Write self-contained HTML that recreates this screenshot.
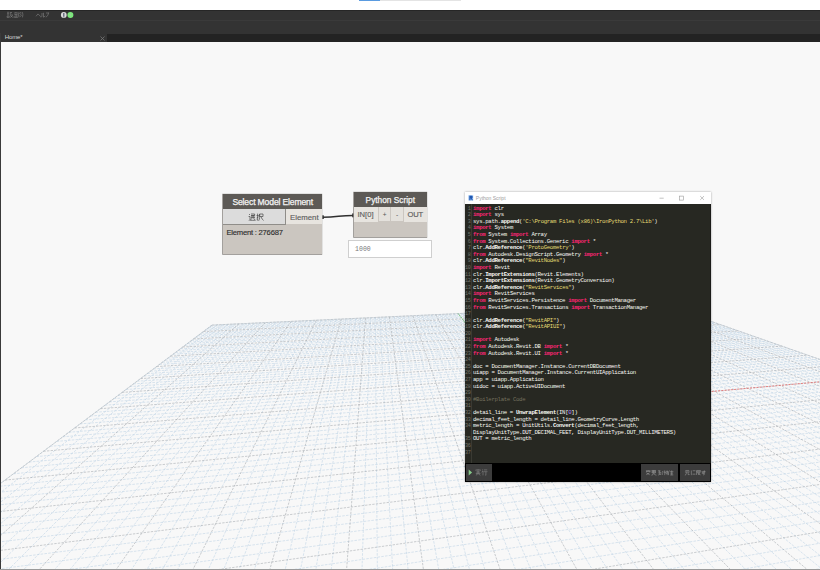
<!DOCTYPE html>
<html><head><meta charset="utf-8">
<style>
*{margin:0;padding:0;box-sizing:border-box}
html,body{width:820px;height:570px;overflow:hidden;background:#fff;font-family:"Liberation Sans",sans-serif}
.abs{position:absolute}
#prog1{left:359px;top:0;width:21px;height:1.3px;background:#5a9be0}
#prog2{left:380px;top:0;width:81px;height:1.3px;background:#e4e4e4}
#menubar{left:0;top:9.5px;width:820px;height:23.5px;background:#333;border-top:1px solid #262626}
#menuline{left:0;top:20px;width:820px;height:1px;background:#3a3a3a}
#tabstrip{left:0;top:33px;width:820px;height:9px;background:#333}
#tabdark{left:107px;top:34px;width:713px;height:7.5px;background:#232323}
#hometxt{left:4.8px;top:33.2px;font-size:6px;letter-spacing:-0.15px;color:#d8d8d8;line-height:8px}
#tabx{left:100px;top:35.5px;width:5px;height:5px}
#canvas{left:0;top:42px;width:820px;height:528px;background:#f8f8f8;overflow:hidden}
#leftb{left:0;top:33px;width:1px;height:537px;background:#3a3a3a}
#botb{left:0;top:568.5px;width:820px;height:1.5px;background:#9a9a9a}
.grid{position:absolute;left:0;top:0}
.node{position:absolute;background:#cbc6c0;box-shadow:-0.3px 0.3px 0 0.5px #8e8b87}
.nhead{position:absolute;left:0;right:0;top:0;background:#5d5a56;color:#f4f4f4;text-align:center;-webkit-text-stroke:0.25px #f4f4f4}
.wire{position:absolute;left:0;top:0}
#outbox{left:348.3px;top:240.1px;width:83.7px;height:17.5px;background:#fff;border:0.8px solid #cfcfcf;font-family:"Liberation Mono",monospace;font-size:6.5px;color:#777;padding-left:5.8px;line-height:18.6px}
#pywin{left:464.8px;top:191.8px;width:246.4px;height:290.6px;background:#000;box-shadow:0 0 2px rgba(0,0,0,.35)}
#pytitle{left:0;top:0;width:246.5px;height:12px;background:#fff}
#pyttxt{left:11px;top:3.4px;font-size:5px;color:#a0a0a0;line-height:7px}
#editor{left:0;top:12px;width:246.5px;height:259.7px;background:#272822;overflow:hidden;border-right:0.8px solid #1c1c19}
#gutsep{left:6.2px;top:0;width:0.6px;height:260px;background:#3a3a33}
#code{left:8.2px;top:1.8px;font-family:"Liberation Mono",monospace;font-size:5.7px;letter-spacing:-0.34px;color:#f8f8f2}
.ln{white-space:pre}
.ln{height:6.595px;line-height:6.595px}
.k{color:#f92672;font-weight:bold}
.s{color:#e6db74}
.f{font-weight:bold}
.c{color:#75715e}
.n{color:#ae81ff}
#nums{left:0;top:1.8px;width:6px;font-family:"Liberation Mono",monospace;font-size:5.13px;letter-spacing:-0.15px;color:#75756c;white-space:pre;text-align:right;line-height:6.595px}
.btn{position:absolute;background:#3c3c3c;top:272.7px;height:16.6px}
</style></head><body>
<div class="abs" id="prog1"></div><div class="abs" id="prog2"></div>
<div class="abs" id="menubar"></div>
<div class="abs" id="menuline"></div>
<div class="abs" id="tabstrip"></div>
<div class="abs" id="tabdark"></div>
<div class="abs" id="hometxt">Home*</div>
<svg class="abs" id="tabx" viewBox="0 0 5 5"><path d="M0.5 0.5L4.5 4.5M4.5 0.5L0.5 4.5" stroke="#777" stroke-width="0.8"/></svg>
<!-- menu text approximations -->
<svg class="abs" style="left:0;top:9px" width="90" height="24" viewBox="0 9 90 24">
 <g stroke="#8a8a8a" stroke-width="0.55" fill="none">
  <g transform="translate(0.56,0) scale(0.92,1)"><path vector-effect="non-scaling-stroke" d="M7 12.3h2.5M7 13.6h2.5M7 14.9h2.5M7 16.2h2.5v1.2h-2.5z M10.5 12.5h2M11 12.3v2.2M10.3 15h3.2M10.6 15.5l2.6 2M13.2 15.5l-2.6 2"/>
  <path vector-effect="non-scaling-stroke" d="M14.5 13h4.5M16.7 12v1M15 14.5h3.5M16.7 14.5v3M15 15.8l-0.6 1.8M16.7 16h2M14.8 17.3h4.2"/>
  <path vector-effect="non-scaling-stroke" d="M20 12.2q-1 2.5 0 5.2M22.8 13q-0.6-0.6-1.3-0.4q-0.8 0.3-0.4 1.1l1.2 1.2q0.5 0.9-0.4 1.4q-0.7 0.3-1.2-0.4M23.8 12.2q1 2.5 0 5.2"/></g>
  <path d="M36 16.3l2-2.4l3 3"/>
  <path d="M42 13v2.2q0 1.5-1 2.2M43.5 12.8v4.4l1.8-1.2"/>
  <path d="M46 13h2.6q-0.3 2.8-2.8 4.3M48.3 12.2l0.5 0.5"/>
 </g>
 <circle cx="63.8" cy="14.9" r="2.9" fill="#dcdcdc"/>
 <rect x="63.2" y="13" width="1.2" height="3.8" fill="#555a70"/>
 <circle cx="70.4" cy="14.9" r="3" fill="#7ae77a"/>
 <circle cx="70.4" cy="14.9" r="1.2" fill="#8fd88f"/>
</svg>
<div class="abs" id="canvas">
 <div style="position:absolute;left:0;top:-42px"><svg class="grid" width="820" height="570" viewBox="0 0 820 570">
<path d="M217.4 324.8L-783.3 1098.6M222.8 324.6L-728.6 1084.9M228.2 324.3L-675.6 1071.7M233.6 324.1L-624.1 1058.8M244.2 323.6L-525.6 1034.3M249.5 323.3L-478.5 1022.5M254.8 323.1L-432.7 1011.1M260.0 322.8L-388.1 999.9M270.5 322.3L-302.5 978.6M275.7 322.1L-261.5 968.3M280.8 321.9L-221.5 958.4M286.0 321.6L-182.5 948.6M296.2 321.1L-107.5 929.9M301.3 320.9L-71.4 920.9M306.4 320.7L-36.2 912.1M311.4 320.4L-1.8 903.5M321.4 320.0L64.4 887.0M326.4 319.7L96.4 879.0M331.4 319.5L127.7 871.2M336.3 319.3L158.2 863.6M346.2 318.8L217.2 848.9M351.0 318.6L245.7 841.8M355.9 318.4L273.6 834.8M360.7 318.1L300.9 828.0M370.4 317.7L353.8 814.8M375.2 317.5L379.4 808.4M379.9 317.2L404.4 802.2M384.7 317.0L429.0 796.0M394.1 316.6L476.6 784.2M398.8 316.4L499.7 778.4M403.5 316.1L522.4 772.7M408.2 315.9L544.6 767.2M417.4 315.5L587.7 756.4M422.0 315.3L608.7 751.2M426.6 315.1L629.3 746.1M431.2 314.9L649.4 741.0M440.3 314.4L688.7 731.2M444.8 314.2L707.8 726.5M449.3 314.0L726.5 721.8M453.8 313.8L745.0 717.2M462.7 313.4L780.8 708.2M467.1 313.2L798.3 703.9M471.5 313.0L815.5 699.6M475.9 312.8L832.3 695.4M484.7 312.4L865.3 687.2M489.0 312.2L881.3 683.2M493.3 312.0L897.1 679.2M497.7 311.8L912.6 675.4M506.2 311.4L942.9 667.8M510.5 311.2L957.7 664.1M514.8 311.0L972.3 660.5M519.0 310.8L986.6 656.9M527.4 310.4L1014.6 649.9M531.6 310.2L1028.2 646.5M535.8 310.0L1041.7 643.1M540.0 309.8L1055.0 639.8M548.2 309.4L1080.9 633.4M552.3 309.2L1093.6 630.2M556.4 309.0L1106.1 627.1M560.5 308.8L1118.4 624.0M568.6 308.5L1142.5 618.0M572.7 308.3L1154.3 615.1M576.7 308.1L1165.9 612.2M580.7 307.9L1177.3 609.3M588.7 307.5L1199.8 603.7M592.7 307.3L1210.8 601.0M596.6 307.2L1221.6 598.2M600.5 307.0L1232.3 595.6M608.4 306.6L1253.3 590.4M612.3 306.4L1263.5 587.8M616.2 306.2L1273.7 585.3M620.0 306.1L1283.7 582.8M627.7 305.7L1303.3 577.9M631.5 305.5L1312.9 575.5M635.4 305.4L1322.4 573.1M639.2 305.2L1331.8 570.8M646.7 304.8L1350.2 566.2M650.5 304.7L1359.2 563.9M654.2 304.5L1368.1 561.7M658.0 304.3L1376.9 559.5M210.3 326.3L664.1 305.0M208.6 327.6L666.6 305.9M206.8 328.9L669.1 306.7M205.1 330.2L671.7 307.6M201.4 333.0L677.0 309.5M199.5 334.4L679.7 310.4M197.6 335.8L682.5 311.4M195.6 337.3L685.3 312.4M191.5 340.4L691.0 314.4M189.4 342.0L694.0 315.4M187.2 343.6L697.0 316.5M185.0 345.3L700.1 317.6M180.4 348.7L706.5 319.8M178.0 350.5L709.7 320.9M175.5 352.4L713.1 322.1M173.0 354.2L716.4 323.3M167.8 358.1L723.4 325.7M165.1 360.2L727.1 327.0M162.3 362.3L730.7 328.3M159.4 364.4L734.5 329.6M153.5 368.9L742.3 332.3M150.4 371.2L746.3 333.7M147.2 373.6L750.4 335.2M143.9 376.0L754.6 336.6M137.0 381.2L763.2 339.7M133.4 383.9L767.7 341.2M129.7 386.6L772.3 342.8M125.9 389.5L777.0 344.5M117.9 395.5L786.8 347.9M113.7 398.6L791.8 349.6M109.4 401.9L797.0 351.4M104.9 405.2L802.3 353.3M95.5 412.3L813.3 357.2M90.5 416.0L819.0 359.2M85.4 419.9L824.9 361.2M80.0 423.9L830.9 363.3M68.8 432.3L843.5 367.7M62.8 436.8L850.0 370.0M56.6 441.4L856.7 372.3M50.1 446.3L863.6 374.8M36.3 456.6L878.1 379.8M29.0 462.1L885.6 382.5M21.4 467.8L893.4 385.2M13.4 473.8L901.4 388.0M-3.8 486.6L918.2 393.9M-13.0 493.5L927.0 396.9M-22.6 500.7L936.1 400.1M-32.8 508.3L945.5 403.4M-54.7 524.8L965.3 410.3M-66.6 533.6L975.7 414.0M-79.1 543.0L986.5 417.7M-92.4 553.0L997.7 421.7M-121.5 574.8L1021.4 429.9M-137.4 586.7L1033.9 434.3M-154.4 599.4L1046.9 438.8M-172.6 613.0L1060.4 443.6M-212.9 643.2L1089.1 453.6M-235.4 660.1L1104.4 459.0M-259.6 678.2L1120.4 464.6M-285.9 697.9L1137.0 470.4M-345.6 742.6L1172.7 482.9M-379.7 768.2L1191.8 489.6M-417.2 796.2L1211.9 496.6M-458.6 827.2L1233.0 503.9M-556.0 900.1L1278.5 519.8M-613.7 943.4L1303.1 528.5M-679.1 992.3L1329.0 537.5M-753.7 1048.2L1356.5 547.1" stroke="#bcd2e3" stroke-width="0.55" stroke-dasharray="2.6 1.2" fill="none"/>
<path d="M212.0 325.1L-839.7 1112.6M238.9 323.8L-574.2 1046.4M265.3 322.6L-344.7 989.1M291.1 321.4L-144.5 939.2M316.4 320.2L31.7 895.2M341.3 319.0L188.0 856.2M365.6 317.9L327.6 821.3M389.4 316.8L453.1 790.0M412.8 315.7L566.4 761.8M435.7 314.6L669.2 736.1M458.2 313.6L763.0 712.7M480.3 312.6L848.9 691.2M502.0 311.6L927.9 671.5M523.2 310.6L1000.7 653.4M544.1 309.6L1068.0 636.6M564.6 308.7L1130.5 621.0M584.7 307.7L1188.6 606.5M604.5 306.8L1242.8 592.9M623.9 305.9L1293.5 580.3M643.0 305.0L1341.0 568.5M661.7 304.1L1385.6 557.3M212.0 325.1L661.7 304.1M203.3 331.6L674.3 308.5M193.6 338.9L688.1 313.4M182.7 347.0L703.3 318.7M170.4 356.2L719.9 324.5M156.5 366.6L738.4 330.9M140.5 378.6L758.9 338.1M122.0 392.4L781.8 346.1M100.3 408.7L807.7 355.2M74.5 428.0L837.1 365.5M43.4 451.3L870.8 377.3M5.0 480.1L909.7 390.9M-43.4 516.3L955.3 406.8M-106.5 563.6L1009.3 425.7M-192.0 627.6L1074.4 448.5M-314.5 719.3L1154.5 476.5M-504.6 861.7L1255.1 511.7M-839.7 1112.6L1385.6 557.3" stroke="#989fa5" stroke-width="0.5" stroke-dasharray="2.4 1.2" fill="none"/>
<path d="M-839.7 1112.6L212.0 325.1L661.7 304.1L1385.6 557.3" stroke="#bfcbd5" stroke-width="0.5" fill="none"/>
<path d="M530.1 407.7L870.8 377.3" stroke="#e86a6a" stroke-width="0.8" stroke-dasharray="2 1.2" fill="none"/>
<path d="M530.1 407.7L458.2 313.6" stroke="#5cc85c" stroke-width="0.8" stroke-dasharray="1.5 0.8" fill="none"/>
</svg></div>
</div>
<div class="abs" id="leftb"></div>
<div class="abs" id="botb"></div>

<!-- wire -->
<svg class="wire" width="820" height="570"><path d="M323 217.2C338 217.2 339 215.4 353 215.4" stroke="#303030" stroke-width="1.5" fill="none"/>
<rect x="322.3" y="215.3" width="1.5" height="3.7" fill="#303030"/><rect x="352.2" y="213.4" width="1.8" height="3.9" fill="#303030"/></svg>

<!-- Select Model Element node -->
<div class="node" style="left:223.1px;top:193.9px;width:99.2px;height:60.6px">
 <div class="nhead" style="height:15.6px;font-size:8.6px;letter-spacing:-0.15px;line-height:16.8px">Select Model Element</div>
 <div class="abs" style="left:0;top:15.6px;width:62.9px;height:15.1px;background:#dcdcdc;border-right:0.7px solid #8f8d89;border-bottom:0.7px solid #8f8d89"></div>
 <svg class="abs" style="left:24.6px;top:19px" width="16" height="8" viewBox="0 0 16 8"><g stroke="#505050" stroke-width="0.75" fill="none">
  <path d="M1 1l1 1M0.6 3.5h1.4v3l-1 1M1.5 7.2q3 0.3 6.2 0M3 1h3.6v1.5h-3.6M3.4 2.8h3M4 2v3.5M5.8 2v3.5M2.8 4.4h4.2M3.4 5.5l-0.6 1.3M5.9 5.5l0.8 1.3"/>
  <path d="M8.6 2.5h2.2M9.6 0.6v6.6l-0.9-0.4M8.6 5l2-1.2M11.6 1h3.4v2.5h-3.4zM11.6 1v3.5q0 2-1 3.3M13 3.8q0.8 2.5 2.6 3.6"/>
 </g></svg>
 <div class="abs" style="left:62.9px;top:15.6px;width:36.3px;height:14.7px;background:#e7e4df;font-size:7.8px;color:#5e5e5e;-webkit-text-stroke:0.15px #5e5e5e;line-height:18.2px;padding-left:4px">Element</div>
 <div class="abs" style="left:3.3px;top:33.8px;font-size:7.6px;letter-spacing:-0.2px;color:#2e2e2e;-webkit-text-stroke:0.15px #2e2e2e;line-height:9.5px">Element : 276687</div>
</div>

<!-- Python Script node -->
<div class="node" style="left:353.9px;top:191.9px;width:72.8px;height:45.3px">
 <div class="nhead" style="height:15.4px;font-size:8.3px;line-height:16.4px">Python Script</div>
 <div class="abs" style="left:0;top:15.2px;width:24.1px;height:14.5px;background:#e7e4df;font-size:7.6px;color:#5e5e5e;-webkit-text-stroke:0.15px #5e5e5e;line-height:16.4px;padding-left:3.6px">IN[0]</div>
 <div class="abs" style="left:25.1px;top:15.2px;width:11.2px;height:13.8px;background:#e4e1dc;font-size:6.5px;color:#555;line-height:15.5px;text-align:center">+</div>
 <div class="abs" style="left:37.1px;top:15.2px;width:12.4px;height:13.8px;background:#e4e1dc;font-size:6.5px;color:#555;line-height:15.5px;text-align:center">-</div>
 <div class="abs" style="left:50px;top:15.2px;width:22.8px;height:14.5px;background:#e7e4df;font-size:7.6px;letter-spacing:-0.2px;color:#5e5e5e;-webkit-text-stroke:0.15px #5e5e5e;line-height:16.4px;padding-left:3.6px">OUT</div>
</div>
<div class="abs" id="outbox">1000</div>

<!-- Python window -->
<div class="abs" id="pywin">
 <div class="abs" id="pytitle">
  <svg class="abs" style="left:3.4px;top:3.1px" width="6" height="6" viewBox="0 0 6 6"><rect x="0.2" y="0.2" width="5.2" height="5.4" fill="#cfe0f5"/><rect x="0.7" y="0.5" width="4.2" height="4.8" fill="#7fb0ea"/><path d="M1.4 0.8h1.9q1.4 0 1.4 1.3q0 1-0.9 1.2l1.1 2h-1l-1-1.9h-0.5v1.9h-1z" fill="#1f56b0"/></svg>
  <div class="abs" id="pyttxt">Python Script</div>
  <svg class="abs" style="left:190px;top:2px" width="56" height="8" viewBox="0 0 56 8"><g stroke="#9a9a9a" stroke-width="0.6" fill="none">
   <path d="M4.5 4.2h4.2"/><rect x="24.6" y="2.1" width="4" height="4"/><path d="M45.2 2.1l3.8 3.8M49 2.1l-3.8 3.8"/></g></svg>
 </div>
 <div class="abs" id="editor">
  <div class="abs" id="gutsep"></div>
  <div class="abs" id="nums">1
2
3
4
5
6
7
8
9
10
11
12
13
14
15
16
17
18
19
20
21
22
23
24
25
26
27
28
29
30
31
32
33
34

35
36
37</div>
  <div class="abs" id="code"><div class="ln"><span class="k">import</span> clr</div>
<div class="ln"><span class="k">import</span> sys</div>
<div class="ln">sys.path.<span class="f">append</span>(<span class="s">'C:\Program Files (x86)\IronPython 2.7\Lib'</span>)</div>
<div class="ln"><span class="k">import</span> System</div>
<div class="ln"><span class="k">from</span> System <span class="k">import</span> Array</div>
<div class="ln"><span class="k">from</span> System.Collections.Generic <span class="k">import</span> *</div>
<div class="ln">clr.<span class="f">AddReference</span>(<span class="s">'ProtoGeometry'</span>)</div>
<div class="ln"><span class="k">from</span> Autodesk.DesignScript.Geometry <span class="k">import</span> *</div>
<div class="ln">clr.<span class="f">AddReference</span>(<span class="s">"RevitNodes"</span>)</div>
<div class="ln"><span class="k">import</span> Revit</div>
<div class="ln">clr.<span class="f">ImportExtensions</span>(Revit.Elements)</div>
<div class="ln">clr.<span class="f">ImportExtensions</span>(Revit.GeometryConversion)</div>
<div class="ln">clr.<span class="f">AddReference</span>(<span class="s">"RevitServices"</span>)</div>
<div class="ln"><span class="k">import</span> RevitServices</div>
<div class="ln"><span class="k">from</span> RevitServices.Persistence <span class="k">import</span> DocumentManager</div>
<div class="ln"><span class="k">from</span> RevitServices.Transactions <span class="k">import</span> TransactionManager</div>
<div class="ln"> </div>
<div class="ln">clr.<span class="f">AddReference</span>(<span class="s">"RevitAPI"</span>)</div>
<div class="ln">clr.<span class="f">AddReference</span>(<span class="s">"RevitAPIUI"</span>)</div>
<div class="ln"> </div>
<div class="ln"><span class="k">import</span> Autodesk</div>
<div class="ln"><span class="k">from</span> Autodesk.Revit.DB <span class="k">import</span> *</div>
<div class="ln"><span class="k">from</span> Autodesk.Revit.UI <span class="k">import</span> *</div>
<div class="ln"> </div>
<div class="ln">doc = DocumentManager.Instance.CurrentDBDocument</div>
<div class="ln">uiapp = DocumentManager.Instance.CurrentUIApplication</div>
<div class="ln">app = uiapp.Application</div>
<div class="ln">uidoc = uiapp.ActiveUIDocument</div>
<div class="ln"> </div>
<div class="ln"><span class="c">#Boilerplate Code</span></div>
<div class="ln"> </div>
<div class="ln">detail_line = <span class="f">UnwrapElement</span>(IN[<span class="n">0</span>])</div>
<div class="ln">decimal_feet_length = detail_line.GeometryCurve.Length</div>
<div class="ln">metric_length = UnitUtils.<span class="f">Convert</span>(decimal_feet_length,</div>
<div class="ln">DisplayUnitType.DUT_DECIMAL_FEET, DisplayUnitType.DUT_MILLIMETERS)</div>
<div class="ln">OUT = metric_length</div>
<div class="ln"> </div>
<div class="ln"> </div>
</div>
 </div>
 <div class="btn" style="left:1px;width:26px"></div>
 <svg class="abs" style="left:1px;top:272.7px" width="26" height="17" viewBox="0 0 26 17"><path d="M2.7 5.6v5.8l3.4-2.9z" fill="#86c98a"/>
  <g stroke="#858585" stroke-width="0.6" fill="none"><path d="M9.7 6.6v-0.7h4.8v0.7M12.1 5.2v0.7M10.6 7h3M10.3 8.2h3.6M12.1 7v2.2M9.8 9.5h4.6M12.1 9.5l-2.2 1.8M12.2 9.7l2.2 1.6"/>
  <path d="M16 6.4l1-0.9M15.6 8.2l1.4-1.1v4.3M17.8 5.9h3.4M17.6 7.7h3.9M19.9 7.7v3.6l-0.7-0.3"/></g></svg>
 <div class="btn" style="left:176px;width:37.6px"></div>
 <div class="btn" style="left:215px;width:30.5px"></div>
 <svg class="abs" style="left:176px;top:272.7px" width="70" height="17" viewBox="0 0 70 17"><g stroke="#a0a0a0" stroke-width="0.55" fill="none"><g transform="translate(-1.561,3.186) scale(0.923,0.685)"><path vector-effect="non-scaling-stroke" d="M7 5.2h5M9.5 4.4v0.8M7.2 6.2h4.6M8 6.2l-0.6 1M11.2 6.2l0.5 1M7.5 8.2l3.6 2.8M11 8.2l-3.6 2.8"/><path vector-effect="non-scaling-stroke" d="M13 4.8h5M13.6 5.8h3.8v2.6h-3.8zM13.6 7.1h3.8M15.5 4.8v4.5q-0.5 2-2.5 2.4M15.6 9.5q1 1.8 2.8 2.2"/><path vector-effect="non-scaling-stroke" d="M20 5.2h2.5l-1.8 2q1.8-0.5 1.8 1.5q0 2-2.2 2.8M23.2 7.2q-1.5 0.5-1.8 2q0 1.5 2 1.5"/><path vector-effect="non-scaling-stroke" d="M25.5 5.4l-0.8 2v4M26 7.2h2.6v2M27.4 4.6v7M29 6.2h2M30 4.8v6.8M29 9l2-1"/><path vector-effect="non-scaling-stroke" d="M32.5 4.8l-1 2.4v4.4M33 6.6h3.8M35 4.6v7M33.5 8.8h2.6M33.3 11.3h3.4"/></g><g transform="translate(6.64,2.96) scale(0.92,0.704)"><path vector-effect="non-scaling-stroke" d="M41 5h4.2M40.5 7h5.2M42 7v2.5q0 1.5-1.5 2.2M44 7v3.8h1.6"/><path vector-effect="non-scaling-stroke" d="M47.5 5v5.5q0 0.8 0.8 0.5M49 5.4h3M48.8 10.2h3.2"/><path vector-effect="non-scaling-stroke" d="M53.2 5h4.2v1.6h-4.2M53.2 5v6.4M53.8 8h3.6M54.5 8.4q0.8 2 3 2.8M56.5 8.5l-1.5 2.8"/><path vector-effect="non-scaling-stroke" d="M58.6 6.8h4.5M61.6 4.8v5.8q0 1-1.2 0.6M61.5 7.3q-2.5 0-2.5 1.4q0 1.2 2.3 0.6"/></g></g></svg>
</div>
</body></html>
